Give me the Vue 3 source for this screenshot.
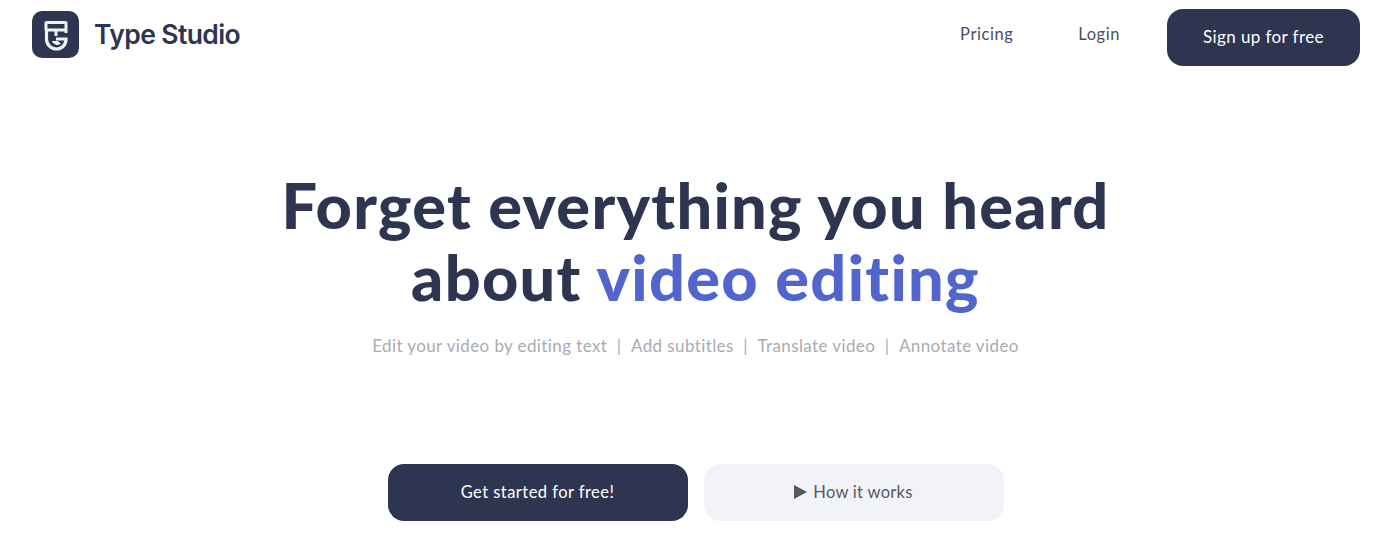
<template>
  <div class="page">
    <header class="nav">
      <div class="brand">
        <svg class="logo" viewBox="0 0 47 47" width="47" height="47">
          <rect width="47" height="47" rx="10" fill="#2d3550" />
          <rect x="14" y="11.500" width="20" height="7.500" rx="0.500" fill="none" stroke="#f1f2f6" stroke-width="3" />
          <path d="M14.500 19v9a10 10 0 0 0 10 10a9.500 9.500 0 0 0 9.500-10h-10" fill="none" stroke="#f1f2f6" stroke-width="3.200" />
          <path d="M24 19v6M34 19v3" fill="none" stroke="#f1f2f6" stroke-width="3" />
          <path d="M20 30a5.500 5.500 0 0 0 9 2.500l-3.500-2.500z" fill="#f1f2f6" />
        </svg>
        <span class="brand-name">Type Studio</span>
      </div>
      <nav class="links">
        <a class="link">Pricing</a>
        <a class="link">Login</a>
        <button class="btn signup">Sign up for free</button>
      </nav>
    </header>

    <main class="hero">
      <h1 class="title">Forget everything you heard<br />about <span class="accent">video editing</span></h1>
      <p class="sub">
        <span v-for="(f, i) in features" :key="f">
          <span v-if="i > 0" class="sep">|</span>{{ f }}
        </span>
      </p>
      <div class="actions">
        <button class="btn cta">Get started for free!</button>
        <button class="btn how"><span class="play"></span>How it works</button>
      </div>
    </main>
  </div>
</template>

<script setup>
const features = [
  "Edit your video by editing text",
  "Add subtitles",
  "Translate video",
  "Annotate video",
];
</script>

<style>
html,
body {
  margin: 0;
  background: #fff;
}
</style>

<style scoped>
.page {
  font-family: Lato, "Open Sans", sans-serif;
  color: #2d3550;
  height: 538px;
  overflow: hidden;
}

.nav {
  display: flex;
  justify-content: space-between;
  align-items: center;
  padding: 9px 29px 0 32px;
}

.brand {
  display: flex;
  align-items: center;
  gap: 15px;
  margin-top: -7px;
}

.brand-name {
  font-family: Inter, sans-serif;
  font-size: 26.5px;
  font-weight: 600;
  letter-spacing: -0.6px;
}

.links {
  display: flex;
  align-items: center;
}

.link {
  font-size: 16.5px;
  letter-spacing: 0.55px;
  color: #4a4f60;
  margin-right: 65px;
  padding-bottom: 8px;
}

.link:nth-child(2) {
  margin-right: 47px;
}

.btn {
  border: 0;
  font-family: inherit;
  font-size: 16.5px;
  letter-spacing: 0.45px;
  display: flex;
  align-items: center;
  justify-content: center;
  padding: 0 0 2px;
}

.signup {
  width: 193px;
  height: 57px;
  border-radius: 16px;
  background: #2d3550;
  color: #fff;
  font-size: 17px;
  letter-spacing: 0.4px;
  padding-bottom: 3px;
}

.hero {
  display: flex;
  flex-direction: column;
  align-items: center;
  padding: 103px 0 0 2px;
}

.title {
  margin: 0;
  text-align: center;
  font-size: 63px;
  line-height: 72px;
  font-weight: 900;
  letter-spacing: 1.3px;
  color: #2d3550;
}

.accent {
  color: #5165cc;
}

.sub {
  margin: 22px 0 0;
  font-size: 17px;
  letter-spacing: 0.4px;
  color: #a9abb0;
}

.sep {
  margin: 0 9.500px;
}

.actions {
  display: flex;
  gap: 16px;
  margin-top: 108px;
}

.cta,
.how {
  width: 300px;
  height: 57px;
  border-radius: 16px;
}

.cta {
  background: #2d3550;
  color: #fff;
}

.how {
  background: #f1f3f8;
  color: #55585f;
  letter-spacing: 0.3px;
}

.play {
  width: 0;
  height: 0;
  border-left: 13px solid #55585f;
  border-top: 7px solid transparent;
  border-bottom: 7px solid transparent;
  margin-right: 6px;
}
</style>
